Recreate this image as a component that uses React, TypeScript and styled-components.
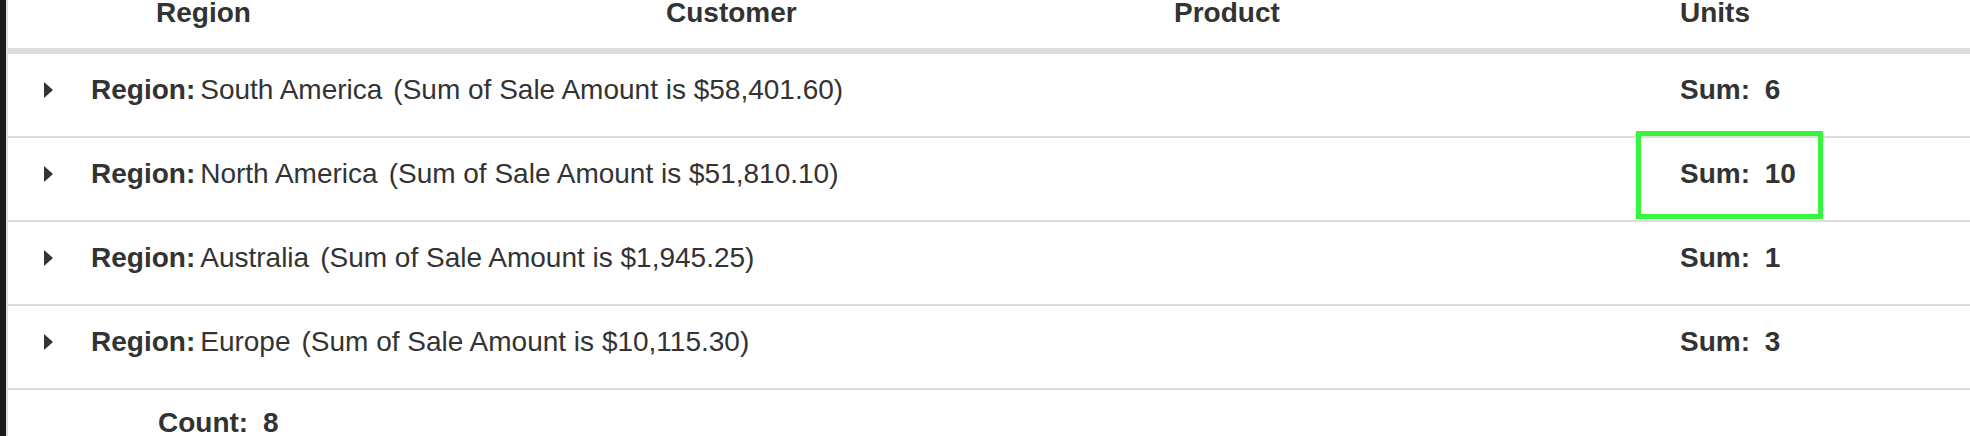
import styled, { createGlobalStyle } from "styled-components";

const GlobalStyle = createGlobalStyle`
	html, body {
		margin: 0;
		padding: 0;
		background: #1c1c1c;
		overflow: hidden;
	}
	body {
		font-family: "Liberation Sans", Arial, Helvetica, sans-serif;
		color: #333;
	}
`;

const Page = styled.div`
	margin-left: 6px;
	min-height: 436px;
	background: #fff;
	border-left: 2px solid #ddd;
	font-size: 28px;
`;

const HeaderRow = styled.div`
	display: grid;
	grid-template-columns: 510px 508px 506px 508px;
	padding: 0 0 22px 148px;
	border-bottom: 6px solid #ddd;
	width: max-content;
	min-width: 100%;
	box-sizing: border-box;
`;

const HeaderCell = styled.div`
	font-weight: bold;
	line-height: 26px;
	white-space: nowrap;
`;

const GroupRow = styled.div`
	display: grid;
	grid-template-columns: 1672px 1fr;
	align-items: center;
	padding: 20px 0 30px;
	border-bottom: 2px solid #ddd;
	line-height: 32px;
`;

const GroupLabel = styled.div`
	display: flex;
	align-items: center;
	padding-left: 36px;
	white-space: nowrap;
`;

const Caret = styled.span`
	flex: none;
	width: 0;
	height: 0;
	border-left: 9px solid #333;
	border-top: 8px solid transparent;
	border-bottom: 8px solid transparent;
	margin-right: 38px;
	cursor: pointer;
`;

const Bold = styled.b`
	font-weight: bold;
	margin-right: 5px;
`;

const Aggregate = styled.span`
	margin-left: 11px;
`;

const SumCell = styled.div<{ $highlight?: boolean }>`
	position: relative;
	font-weight: bold;
	white-space: nowrap;

	&::after {
		content: "";
		display: ${(p) => (p.$highlight ? "block" : "none")};
		position: absolute;
		left: -44px;
		top: -27px;
		width: 187px;
		height: 88px;
		box-sizing: border-box;
		border: 5px solid #36f53c;
		pointer-events: none;
	}
`;

const Value = styled.span`
	margin-left: 7px;
`;

const FooterRow = styled.div`
	padding: 17px 0 0 150px;
	line-height: 32px;
	font-weight: bold;
	white-space: nowrap;
`;

const groups = [
	{ region: "South America", amount: "$58,401.60", units: 6 },
	{ region: "North America", amount: "$51,810.10", units: 10, active: true },
	{ region: "Australia", amount: "$1,945.25", units: 1 },
	{ region: "Europe", amount: "$10,115.30", units: 3 },
];

function App() {
	return (
		<>
			<GlobalStyle />
			<Page>
				<HeaderRow>
					{["Region", "Customer", "Product", "Units"].map((h) => (
						<HeaderCell key={h}>{h}</HeaderCell>
					))}
				</HeaderRow>
				{groups.map((g) => (
					<GroupRow key={g.region}>
						<GroupLabel>
							<Caret />
							<Bold>Region:</Bold>
							<span>{g.region}</span>
							<Aggregate>(Sum of Sale Amount is {g.amount})</Aggregate>
						</GroupLabel>
						<SumCell $highlight={g.active}>
							Sum: <Value>{g.units}</Value>
						</SumCell>
					</GroupRow>
				))}
				<FooterRow>
					Count: <Value>8</Value>
				</FooterRow>
			</Page>
		</>
	);
}

export default App;
